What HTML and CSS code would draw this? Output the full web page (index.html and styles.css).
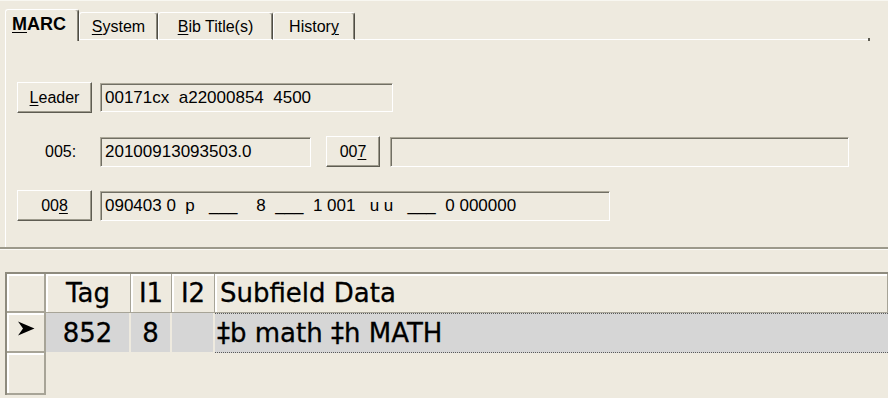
FILE: index.html
```html
<!DOCTYPE html>
<html lang="en">
<head>
    <meta charset="UTF-8">
    <title>MARC Record</title>
    <link rel="stylesheet" href="styles.css">
</head>
<body>
    <div class="tabs">
        <div class="tab tab-marc active"><u>M</u>ARC</div>
        <div class="tab tab-system"><u>S</u>ystem</div>
        <div class="tab tab-bib"><u>B</u>ib Title(s)</div>
        <div class="tab tab-history">Histor<u>y</u></div>
        <div class="tab-rest"><span class="tab-corner"></span></div>
    </div>

    <div class="panel">
        <div class="row">
            <button class="btn btn-wide"><u>L</u>eader</button>
            <div class="field f-leader">00171cx  a22000854  4500</div>
        </div>
        <div class="row">
            <span class="label">005:</span>
            <div class="field f-005">20100913093503.0</div>
            <button class="btn btn-007">00<u>7</u></button>
            <div class="field f-007"></div>
        </div>
        <div class="row">
            <button class="btn btn-wide">00<u>8</u></button>
            <div class="field f-008">090403 0  p   ___    8  ___  1 001   u u   ___  0 000000</div>
        </div>
    </div>

    <div class="divider"></div>

    <div class="grid">
        <div class="rowhead"></div>
        <div class="head center">Tag</div>
        <div class="head center">I1</div>
        <div class="head center">I2</div>
        <div class="head">Subfield Data</div>

        <div class="rowhead">
            <svg class="pointer" width="18" height="15" viewBox="0 0 18 15">
                <polygon points="1,0.5 17.5,7.5 1,14.5 6,7.5" fill="#000"/>
            </svg>
        </div>
        <div class="cell center">852</div>
        <div class="cell center">8</div>
        <div class="cell"></div>
        <div class="cell focus">&Dagger;b math &Dagger;h MATH</div>

        <div class="rowhead"></div>
    </div>
</body>
</html>
```

FILE: styles.css
```css
body {
    margin: 0;
    width: 888px;
    height: 398px;
    overflow: hidden;
    background-color: #eeeadf;
    border-top: 1px solid #f8f7f1;
    box-sizing: border-box;
    font-family: "Liberation Sans", Arial, sans-serif;
    font-size: 16px;
    color: #000;
}
u {
    text-decoration-thickness: 1px;
    text-underline-offset: 2px;
}

/* tab strip */
.tabs {
    display: flex;
    align-items: flex-end;
    height: 39px;
    padding-left: 5px;
}
.tab {
    box-sizing: border-box;
    height: 28px;
    display: flex;
    align-items: center;
    justify-content: center;
    padding-top: 2px;
    border-top: 1px solid #fff;
    border-left: 1px solid #fff;
    border-right: 1px solid #4f4d45;
    border-bottom: 1px solid #fff;
    border-radius: 3px 3px 0 0;
    box-shadow: inset -1px 0 #8a877b;
}
.tab.active {
    height: 32px;
    margin-bottom: -1px;
    border-bottom: none;
    font-size: 18px;
    font-weight: bold;
    padding: 0 6px 2px 0;
    position: relative;
    z-index: 1;
    background-color: #eeeadf;
}
.tab-marc { width: 74px; }
.tab-system { width: 79px; }
.tab-bib { width: 115px; }
.tab-history { width: 82px; }
.tab-rest {
    width: 513px;
    border-bottom: 1px solid #fff;
    position: relative;
}
.tab-corner {
    position: absolute;
    right: -2px;
    bottom: -2px;
    width: 2px;
    height: 3px;
    background-color: #5e5c52;
}

/* record panel */
.panel {
    margin-left: 5px;
    height: 207px;
    box-sizing: border-box;
    border-left: 1px solid #fff;
    padding: 42px 0 0 11px;
    display: flex;
    flex-direction: column;
    gap: 23px;
}
.row {
    display: flex;
    align-items: center;
    height: 31px;
}
.btn {
    box-sizing: border-box;
    height: 31px;
    padding: 0;
    background-color: #eeeadf;
    border: 1px solid;
    border-color: #fff #5e5c52 #5e5c52 #fff;
    box-shadow: inset -1px -1px #9d9a8c;
    font-family: inherit;
    font-size: 16px;
    color: #000;
}
.btn-wide {
    width: 75px;
    margin-right: 8px;
}
.btn-007 {
    width: 54px;
    margin: 0 10px 0 15px;
}
.label {
    width: 83px;
    box-sizing: border-box;
    padding-left: 28px;
}
.field {
    box-sizing: border-box;
    height: 30px;
    line-height: 27px;
    padding-left: 4px;
    border: 1px solid;
    border-color: #aca899 #fff #fff #aca899;
    box-shadow: inset 1px 1px #716f64;
    font-size: 17px;
    white-space: pre;
}
.f-leader { width: 293px; height: 29px; }
.f-005 { width: 211px; }
.f-007 { width: 459px; }
.f-008 { width: 510px; }

.divider {
    border-top: 2px solid #9c998b;
    border-bottom: 1px solid #fbfaf6;
}

/* field grid */
.grid {
    margin: 22px 0 0 5px;
    display: grid;
    grid-template-columns: 39px 85px 41px 43px 1fr;
    grid-template-rows: 39px 40px 42px;
    border-top: 2px solid #8e8b7e;
    border-left: 2px solid #8e8b7e;
    font-family: "DejaVu Sans", Verdana, sans-serif;
    font-size: 26px;
    -webkit-text-stroke: 0.3px #000;
}
.grid > div {
    box-sizing: border-box;
    display: flex;
    align-items: center;
}
.center {
    justify-content: center;
}
.head {
    border-right: 1px solid #a7a497;
    border-bottom: 1px solid #a7a497;
    box-shadow: inset 2px 2px #fff;
    padding-left: 5px;
}
.head.center {
    padding-left: 0;
}
.rowhead {
    border-right: 2px solid #a7a497;
    border-bottom: 2px solid #a7a497;
    box-shadow: inset 2px 2px #fff;
    justify-content: center;
}
.pointer {
    margin: -8px 0 0 1px;
}
.cell {
    background-color: #d6d6d6;
    border-right: 2px solid #eeeadf;
    border-bottom: 1px solid #eeeadf;
}
.cell.focus {
    border-top: 1px dotted #5a5a5a;
    border-bottom: 1px dotted #5a5a5a;
    border-right: none;
    padding-left: 2px;
}
```
